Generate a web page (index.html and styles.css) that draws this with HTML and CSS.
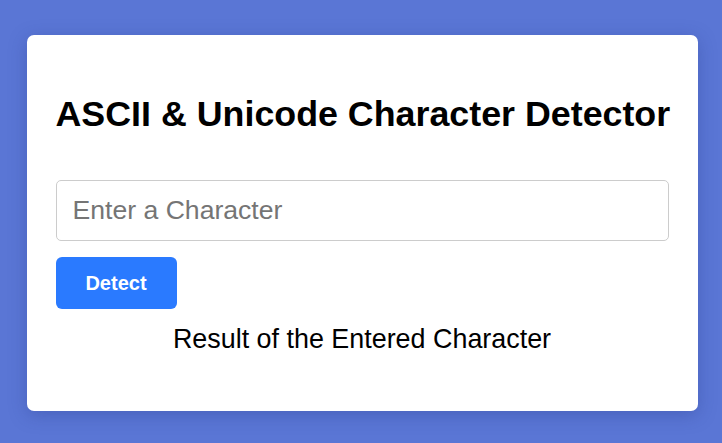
FILE: index.html
```html
<!DOCTYPE html>
<html lang="en">
<head>
<meta charset="utf-8">
<title>ASCII & Unicode Character Detector</title>
<link rel="stylesheet" href="styles.css">
</head>
<body>
  <main class="card">
    <h1 class="title">ASCII &amp; Unicode Character Detector</h1>
    <input class="char-input" type="text" placeholder="Enter a Character">
    <div class="actions">
      <button class="detect-btn" type="button">Detect</button>
    </div>
    <p class="result">Result of the Entered Character</p>
  </main>
</body>
</html>
```
FILE: styles.css
```css
* { box-sizing: border-box; }

html, body {
  margin: 0;
  height: 100%;
}

body {
  background: #5a76d5;
  font-family: "Liberation Sans", Arial, sans-serif;
  display: flex;
  justify-content: center;
  padding-top: 35px;
  padding-left: 2px;
}

.card {
  width: 671px;
  height: 376px;
  background: #ffffff;
  border-radius: 7px;
  padding: 29px 29px;
  box-shadow: 0 4px 18px rgba(40, 60, 140, 0.35);
  display: flex;
  flex-direction: column;
}

.title {
  margin: 30px 0 0;
  font-size: 35.8px;
  font-weight: 700;
  color: #000;
  line-height: normal;
  white-space: nowrap;
}

.char-input {
  margin-top: 45px;
  width: 100%;
  height: 61px;
  border: 1px solid #cccccc;
  border-radius: 5px;
  padding: 0 16px;
  font-family: inherit;
  font-size: 26.6px;
  color: #000;
  outline: none;
}

.char-input::placeholder {
  color: #757575;
}

.actions {
  margin-top: 16px;
  display: flex;
}

.detect-btn {
  width: 121px;
  height: 52px;
  border: none;
  border-radius: 6px;
  background: #2a7aff;
  color: #ffffff;
  font-family: inherit;
  font-size: 20px;
  font-weight: 700;
  cursor: pointer;
}

.result {
  margin: 15px 0 0;
  text-align: center;
  font-size: 26.9px;
  color: #000;
  line-height: normal;
}
```
